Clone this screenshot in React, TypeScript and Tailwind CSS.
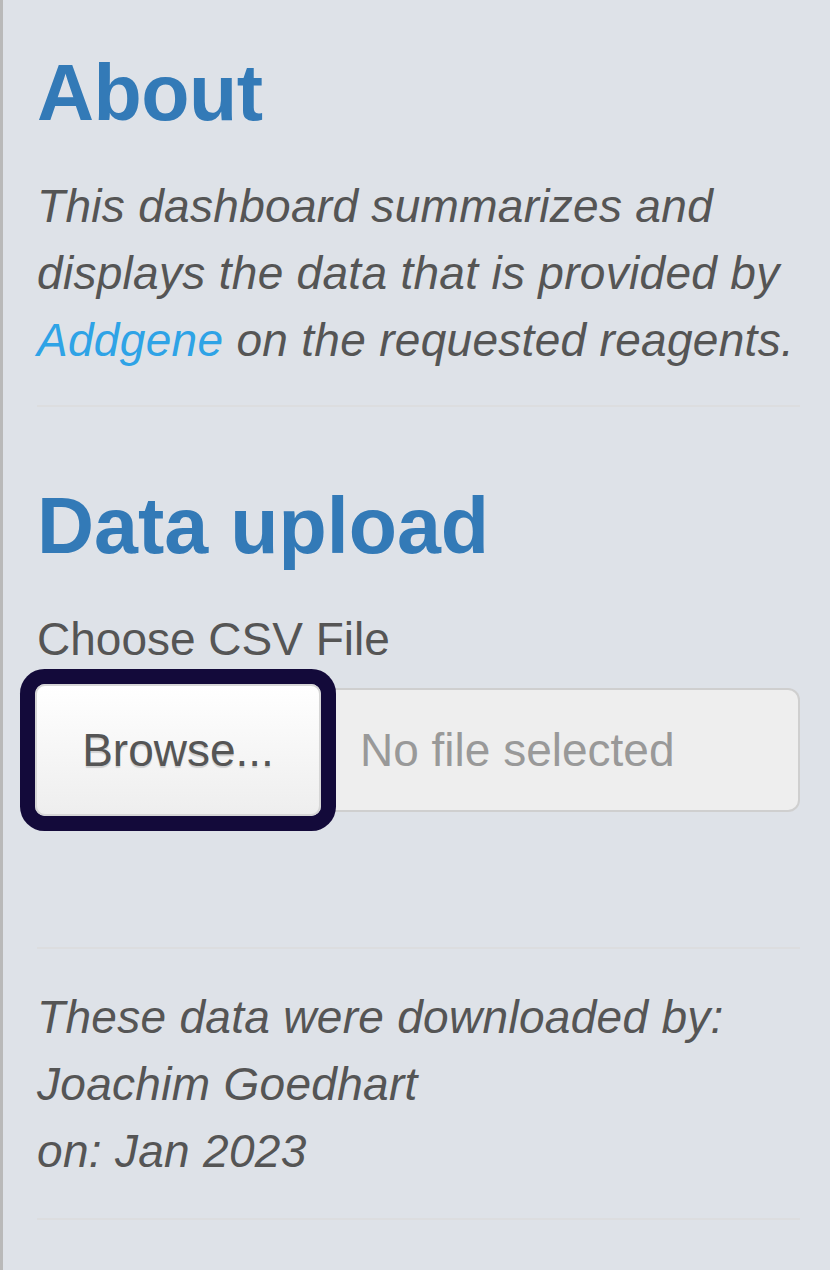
export default function App() {
  return (
    <div
      className="min-h-screen w-full bg-[#dee2e8] border-l-[3px] border-[#b9b9b9] pl-[34px] pr-[30px] pt-[49px] pb-10"
      style={{ fontFamily: '"Liberation Sans", Arial, Helvetica, sans-serif' }}
    >
      <h2 className="text-[79px] leading-[88px] font-bold text-[#337ab7] tracking-[-0.5px]">About</h2>
      <p className="mt-[36px] text-[46px] leading-[67px] italic text-[#555555] tracking-[0.3px]">
        This dashboard summarizes and displays the data that is provided by{" "}
        <a href="#" className="text-[#2ea3e6]">
          Addgene
        </a>{" "}
        on the requested reagents.
      </p>
      <div className="mt-[31px] border-t-2 border-[#dcdddf]" />

      <h2 className="mt-[75px] text-[79px] leading-[88px] font-bold text-[#337ab7]">Data upload</h2>
      <div className="mt-[36px] text-[46px] leading-[67px] text-[#555555]">Choose CSV File</div>
      <div className="mt-[11px] -ml-[2px] flex items-center h-[132px]">
        <button className="relative z-10 w-[286px] h-[132px] shrink-0 rounded-[10px] border-2 border-[#d6d6d6] bg-gradient-to-b from-white to-[#eeeeee] text-[46px] text-[#555555] shadow-[0_0_0_15px_#130a3a] [text-shadow:0_2px_1px_rgba(0,0,0,0.15)]">
          Browse...
        </button>
        <div className="flex-1 h-[124px] flex items-center rounded-r-[12px] border-2 border-l-0 border-[#cfcfcf] bg-[#eeeeee] pl-[39px] text-[46px] text-[#999999]">
          No file selected
        </div>
      </div>
      <div className="mt-[131px] border-t-2 border-[#dcdddf]" />

      <p className="mt-[35px] text-[46px] leading-[67px] italic text-[#555555] tracking-[0.3px]">
        These data were downloaded by:
        <br />
        Joachim Goedhart
        <br />
        on: Jan 2023
      </p>
      <div className="mt-[33px] border-t-2 border-[#dcdddf]" />
    </div>
  );
}
